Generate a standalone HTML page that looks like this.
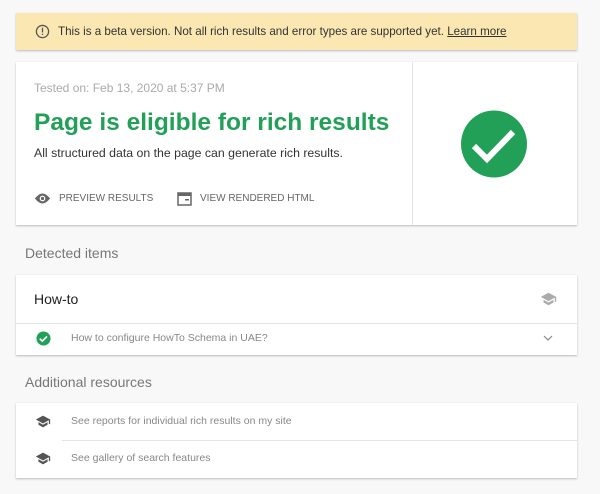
<!DOCTYPE html>
<html><head><style>
body{margin:0;width:600px;height:494px;background:#f8f8f8;font-family:"Liberation Sans",sans-serif;position:relative;overflow:hidden}
.abs{position:absolute}
.card{position:absolute;background:#fff;box-shadow:0 1px 2px rgba(0,0,0,.25)}
.t{position:absolute;white-space:nowrap}
</style></head><body>
<div class="card" style="left:16px;top:13px;width:561px;height:37px;background:#fbe7b2"></div>
<svg class="abs" style="left:35px;top:24px" width="15" height="15" viewBox="0 0 16 16"><circle cx="8" cy="8" r="6.5" fill="none" stroke="#555" stroke-width="1.4"/><rect x="7.3" y="4" width="1.4" height="5" fill="#555"/><rect x="7.3" y="10.3" width="1.4" height="1.4" fill="#555"/></svg>
<div class="t" style="left:58px;top:25px;font-size:11.6px;color:#333">This is a beta version. Not all rich results and error types are supported yet. <span style="text-decoration:underline">Learn more</span></div>

<div class="card" style="left:16px;top:62px;width:561px;height:163px"></div>
<div class="abs" style="left:412px;top:62px;width:1px;height:163px;background:#e4e4e4"></div>
<div class="t" style="left:34px;top:81px;font-size:12px;color:#aaa">Tested on: Feb 13, 2020 at 5:37 PM</div>
<div class="t" style="left:34px;top:109px;font-size:24.5px;color:#23a058;font-weight:bold">Page is eligible for rich results</div>
<div class="t" style="left:34px;top:146px;font-size:12.3px;color:#333">All structured data on the page can generate rich results.</div>
<svg class="abs" style="left:34px;top:192px" width="17" height="13" viewBox="0 0 24 16"><path d="M12 1C6 1 2 8 1 8c1 0 5 7 11 7s10-7 11-7c-1 0-5-7-11-7z" fill="#666"/><circle cx="12" cy="8" r="4" fill="#fff"/><circle cx="12" cy="8" r="2.3" fill="#666"/></svg>
<div class="t" style="left:59px;top:193px;font-size:10px;color:#666">PREVIEW RESULTS</div>
<svg class="abs" style="left:177px;top:192px" width="15" height="14" viewBox="0 0 15 14"><rect x="1" y="1" width="13" height="12" fill="none" stroke="#666" stroke-width="1.5"/><rect x="1" y="1" width="13" height="3" fill="#666"/><rect x="8" y="7" width="4" height="1.5" fill="#666"/></svg>
<div class="t" style="left:200px;top:193px;font-size:10px;color:#666">VIEW RENDERED HTML</div>
<svg class="abs" style="left:460px;top:110px" width="68" height="68" viewBox="0 0 68 68"><ellipse cx="34" cy="34" rx="33" ry="33.5" fill="#23a058"/><path d="M14 36l13 13 26-27" fill="none" stroke="#fff" stroke-width="6"/></svg>

<div class="t" style="left:25px;top:245px;font-size:14px;color:#777">Detected items</div>
<div class="card" style="left:16px;top:275px;width:561px;height:80px"></div>
<div class="abs" style="left:16px;top:323px;width:561px;height:1px;background:#e4e4e4"></div>
<div class="t" style="left:34px;top:291px;font-size:14px;color:#222">How-to</div>
<svg class="abs" style="left:540px;top:292px" width="17" height="14" viewBox="0 0 24 20"><path d="M12 1L1 7l11 6 9-5v6h2V7z" fill="#aaa"/><path d="M5 11v4l7 4 7-4v-4l-7 4z" fill="#aaa"/></svg>
<svg class="abs" style="left:36px;top:331px" width="15" height="15" viewBox="0 0 16 16"><circle cx="8" cy="8" r="7.5" fill="#23a058"/><path d="M4 8.2l2.7 2.6 5-5" fill="none" stroke="#fff" stroke-width="1.8"/></svg>
<div class="t" style="left:71px;top:332px;font-size:10.5px;color:#888">How to configure HowTo Schema in UAE?</div>
<svg class="abs" style="left:543px;top:335px" width="10" height="7" viewBox="0 0 10 7"><path d="M1 1l4 4 4-4" fill="none" stroke="#888" stroke-width="1.2"/></svg>

<div class="t" style="left:25px;top:374px;font-size:14px;color:#777">Additional resources</div>
<div class="card" style="left:16px;top:403px;width:561px;height:75px"></div>
<div class="abs" style="left:62px;top:440px;width:515px;height:1px;background:#e4e4e4"></div>
<svg class="abs" style="left:35px;top:415px" width="16" height="13" viewBox="0 0 24 20"><path d="M12 1L1 7l11 6 9-5v6h2V7z" fill="#555"/><path d="M5 11v4l7 4 7-4v-4l-7 4z" fill="#555"/></svg>
<div class="t" style="left:71px;top:415px;font-size:10.5px;color:#888">See reports for individual rich results on my site</div>
<svg class="abs" style="left:35px;top:452px" width="16" height="13" viewBox="0 0 24 20"><path d="M12 1L1 7l11 6 9-5v6h2V7z" fill="#555"/><path d="M5 11v4l7 4 7-4v-4l-7 4z" fill="#555"/></svg>
<div class="t" style="left:71px;top:452px;font-size:10.5px;color:#888">See gallery of search features</div>
</body></html>
